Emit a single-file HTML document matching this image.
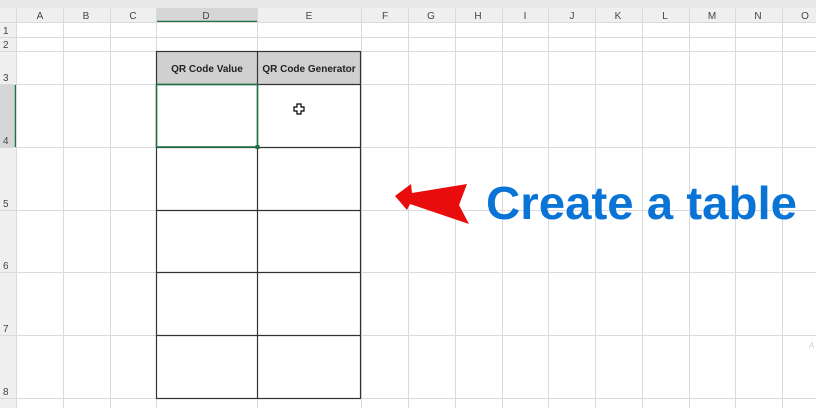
<!DOCTYPE html>
<html><head><meta charset="utf-8"><style>
body{margin:0;width:816px;height:408px;overflow:hidden;background:#fff;font-family:"Liberation Sans",Arial,sans-serif}
</style></head><body>
<svg width="816" height="408" viewBox="0 0 816 408" xmlns="http://www.w3.org/2000/svg" style="position:absolute;left:0;top:0">
<rect x="0" y="0" width="816" height="8" fill="#e8e8e8"/>
<rect x="0" y="8" width="816" height="14" fill="#efefef"/>
<rect x="0" y="8" width="16" height="400" fill="#efefef"/>
<rect x="156" y="8" width="101" height="14" fill="#d6d6d6"/>
<line x1="156" y1="21.5" x2="257" y2="21.5" stroke="#217346" stroke-width="1.5"/>
<rect x="0" y="84" width="16" height="63" fill="#d6d6d6"/>
<line x1="15.5" y1="84" x2="15.5" y2="147" stroke="#217346" stroke-width="1.5"/>
<g stroke="#dadada" stroke-width="1">
<line x1="0" y1="22.5" x2="816" y2="22.5"/>
<line x1="0" y1="37.5" x2="816" y2="37.5"/>
<line x1="0" y1="51.5" x2="816" y2="51.5"/>
<line x1="0" y1="84.5" x2="816" y2="84.5"/>
<line x1="0" y1="147.5" x2="816" y2="147.5"/>
<line x1="0" y1="210.5" x2="816" y2="210.5"/>
<line x1="0" y1="272.5" x2="816" y2="272.5"/>
<line x1="0" y1="335.5" x2="816" y2="335.5"/>
<line x1="0" y1="398.5" x2="816" y2="398.5"/>
<line x1="16.5" y1="8" x2="16.5" y2="408"/>
<line x1="63.5" y1="8" x2="63.5" y2="408"/>
<line x1="110.5" y1="8" x2="110.5" y2="408"/>
<line x1="156.5" y1="8" x2="156.5" y2="408"/>
<line x1="257.5" y1="8" x2="257.5" y2="408"/>
<line x1="361.5" y1="8" x2="361.5" y2="408"/>
<line x1="408.5" y1="8" x2="408.5" y2="408"/>
<line x1="455.5" y1="8" x2="455.5" y2="408"/>
<line x1="502.5" y1="8" x2="502.5" y2="408"/>
<line x1="548.5" y1="8" x2="548.5" y2="408"/>
<line x1="595.5" y1="8" x2="595.5" y2="408"/>
<line x1="642.5" y1="8" x2="642.5" y2="408"/>
<line x1="689.5" y1="8" x2="689.5" y2="408"/>
<line x1="735.5" y1="8" x2="735.5" y2="408"/>
<line x1="782.5" y1="8" x2="782.5" y2="408"/>
</g>
<rect x="156.5" y="51.5" width="204" height="33" fill="#d0d0d0"/>
<g stroke="#333" stroke-width="1.2" fill="none">
<rect x="156.5" y="51.5" width="204" height="347"/>
<line x1="257.5" y1="51.5" x2="257.5" y2="398.5"/>
<line x1="156.5" y1="84.5" x2="360.5" y2="84.5"/>
<line x1="156.5" y1="147.5" x2="360.5" y2="147.5"/>
<line x1="156.5" y1="210.5" x2="360.5" y2="210.5"/>
<line x1="156.5" y1="272.5" x2="360.5" y2="272.5"/>
<line x1="156.5" y1="335.5" x2="360.5" y2="335.5"/>
</g>
<rect x="156.5" y="84.5" width="101" height="62.5" fill="none" stroke="#217346" stroke-width="1.6"/>
<rect x="255.5" y="145" width="4" height="4" fill="#217346"/>
<path d="M297 104h4v3h3v4h-3v3h-4v-3h-3v-4h3z" fill="#fff" stroke="#000" stroke-width="1.2"/>
<polygon points="395,196 411,184 412,193 467,184 459,205 469,224 410,204 407,210" fill="#e80c0c"/>
<g font-family="Liberation Sans,Arial,sans-serif" font-size="10" fill="#444" text-anchor="middle">
<text x="40" y="19">A</text><text x="86" y="19">B</text><text x="133" y="19">C</text><text x="206" y="19">D</text><text x="309" y="19">E</text><text x="385" y="19">F</text><text x="431" y="19">G</text><text x="478" y="19">H</text><text x="525" y="19">I</text><text x="572" y="19">J</text><text x="618" y="19">K</text><text x="665" y="19">L</text><text x="712" y="19">M</text><text x="758" y="19">N</text><text x="805" y="19">O</text>
</g>
<g font-family="Liberation Sans,Arial,sans-serif" font-size="10" fill="#444">
<text x="3" y="34">1</text><text x="3" y="48">2</text><text x="3" y="81">3</text><text x="3" y="144">4</text><text x="3" y="207">5</text><text x="3" y="269">6</text><text x="3" y="332">7</text><text x="3" y="395">8</text>
</g>
<g font-family="Liberation Sans,Arial,sans-serif" font-size="10" font-weight="bold" fill="#222" text-anchor="middle">
<text x="207" y="72">QR Code Value</text><text x="309" y="72">QR Code Generator</text>
</g>
<text x="486" y="219" font-family="Liberation Sans,Arial,sans-serif" font-size="46" font-weight="bold" fill="#0a74d6" textLength="311" lengthAdjust="spacingAndGlyphs">Create a table</text>
<text x="809" y="348" font-family="Liberation Sans,Arial,sans-serif" font-size="8" fill="#ccc">A</text>
</svg>
</body></html>
